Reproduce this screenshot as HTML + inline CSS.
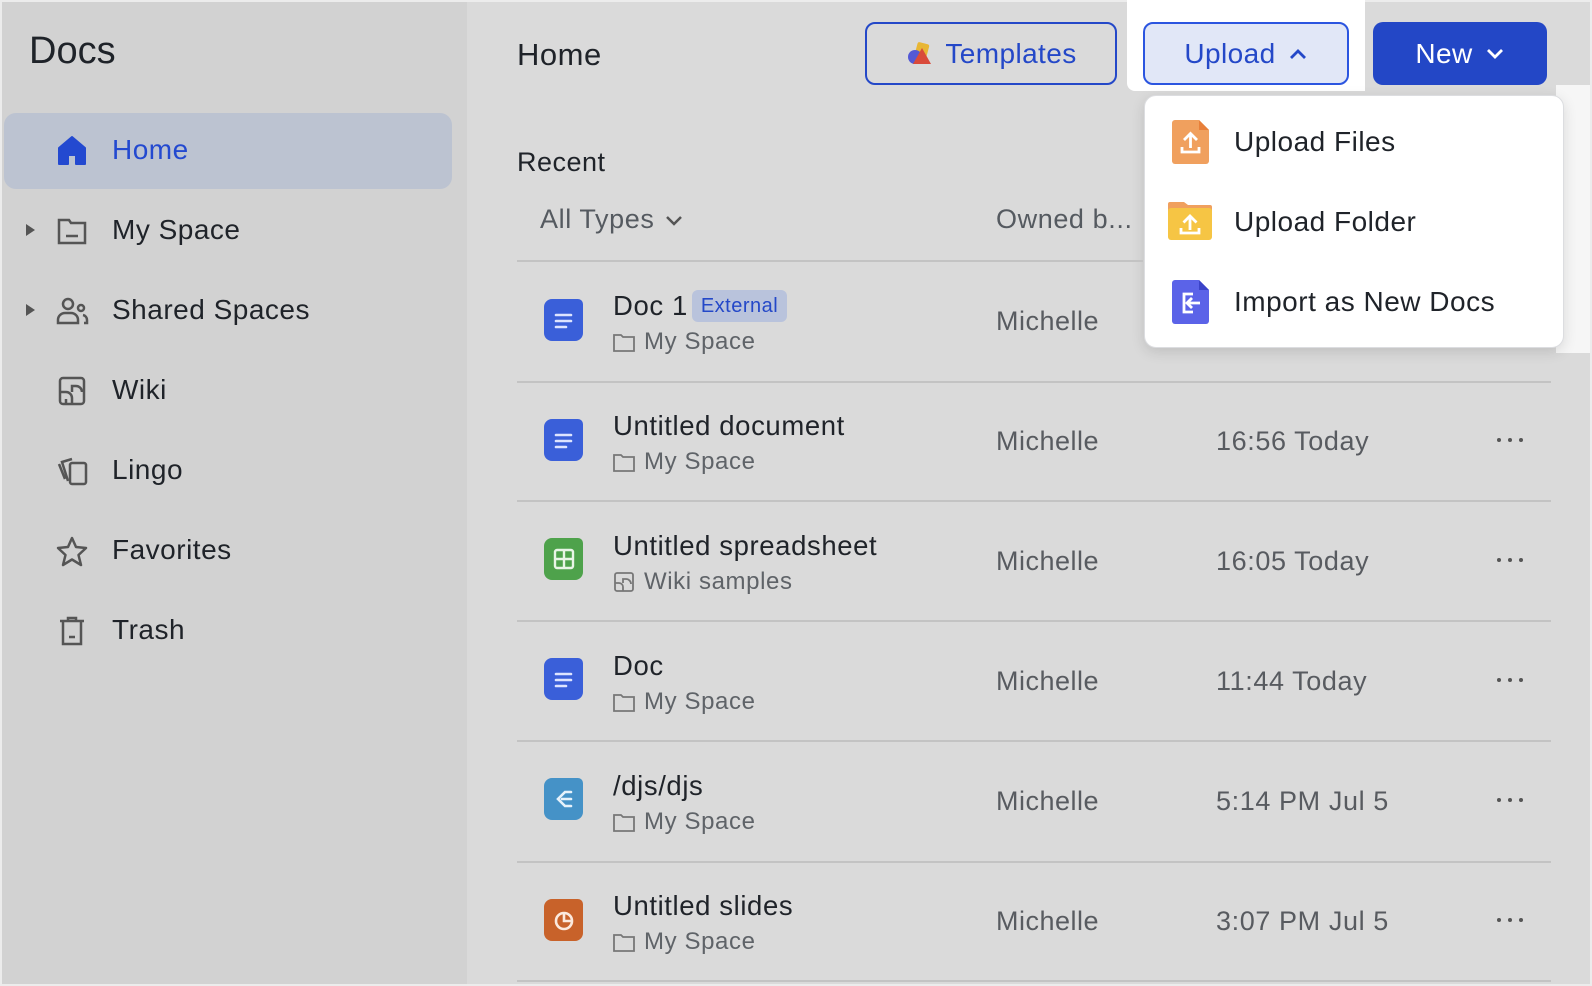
<!DOCTYPE html>
<html><head><meta charset="utf-8"><style>
*{margin:0;padding:0;box-sizing:border-box}
body{width:1592px;height:986px;overflow:hidden;background:#ececec;font-family:"Liberation Sans",sans-serif;position:relative}
.a{position:absolute}
.side{left:2px;top:2px;width:465px;height:982px;background:#d2d2d2}
.main{left:467px;top:2px;width:1123px;height:982px;background:#dadada}
.nav{position:absolute;left:0;height:40px;display:flex;align-items:center;font-size:28px;color:#1f2329;letter-spacing:0.5px}
.nav svg{position:absolute;left:56px;top:5px}
.nav span{position:absolute;left:112px;white-space:nowrap}
.car{position:absolute;left:26px;width:0;height:0;border-left:9px solid #555;border-top:6px solid transparent;border-bottom:6px solid transparent}
.btn{position:absolute;top:22px;height:63px;border-radius:10px;font-size:28px;display:flex;align-items:center;justify-content:center;letter-spacing:0.4px}
.line{position:absolute;left:517px;width:1034px;height:2px;background:#c3c3c3}
.t{position:absolute;left:613px;font-size:27.5px;color:#1f2329;white-space:nowrap;letter-spacing:0.6px}
.s{position:absolute;left:613px;font-size:24px;color:#5f6368;white-space:nowrap;letter-spacing:0.6px}
.s svg{vertical-align:-3px;margin-right:9px}
.o{position:absolute;left:996px;font-size:27px;color:#585b60;letter-spacing:0.5px}
.tm{position:absolute;left:1216px;font-size:27px;color:#585b60;letter-spacing:0.6px}
.d{position:absolute;left:1497px;width:30px;height:6px}
.d i{position:absolute;top:0;width:4px;height:4px;border-radius:50%;background:#555}
.ic{position:absolute;left:544px;width:39px;height:42px;border-radius:8px 5px 8px 8px}
.mi{position:absolute;left:1234px;font-size:28px;color:#1f2329;letter-spacing:0.5px}
</style></head><body>
<div class="a side"></div>
<div class="a main"></div>
<div class="a" style="left:29px;top:30px;font-size:38px;color:#1f2329">Docs</div>
<div class="a" style="left:4px;top:113px;width:448px;height:76px;background:#bcc3d1;border-radius:12px"></div>

<div class="nav" style="top:130px"><svg width="32" height="32" viewBox="0 0 32 32"><path d="M16 2 L29 13 V29 H20 V20 H12 V29 H3 V13 Z" fill="#2349d0" stroke="#2349d0" stroke-linejoin="round" stroke-width="2"/></svg><span style="color:#2349d0">Home</span></div>
<div class="car" style="top:224px"></div>
<div class="nav" style="top:210px"><svg width="32" height="32" viewBox="0 0 32 32" fill="none" stroke="#555" stroke-width="2.5"><path d="M3 5h10l2 3h14v20H3z"/><path d="M10 21h12"/></svg><span>My Space</span></div>
<div class="car" style="top:304px"></div>
<div class="nav" style="top:290px"><svg width="34" height="32" viewBox="0 0 34 32" fill="none" stroke="#555" stroke-width="2.5"><circle cx="12" cy="9" r="5"/><path d="M2 28v-3a7 7 0 0 1 7-7h6a7 7 0 0 1 7 7v3z"/><circle cx="25" cy="13" r="3"/><path d="M27 20a5 5 0 0 1 4 5v3h-3"/></svg><span>Shared Spaces</span></div>
<div class="nav" style="top:370px"><svg width="32" height="32" viewBox="0 0 32 32" fill="none" stroke="#555" stroke-width="2.5"><rect x="4" y="3" width="24" height="26" rx="3"/><path d="M4 17h6a6 6 0 0 1 6 6v6M10 29v-5M16 17V11h4a6 6 0 0 1 6 6"/></svg><span>Wiki</span></div>
<div class="nav" style="top:450px"><svg width="34" height="32" viewBox="0 0 34 32" fill="none" stroke="#555" stroke-width="2.5"><rect x="14" y="8" width="16" height="21" rx="2"/><path d="M12 26 6 7l10-3M9 24 3 9"/></svg><span>Lingo</span></div>
<div class="nav" style="top:530px"><svg width="32" height="32" viewBox="0 0 32 32" fill="none" stroke="#555" stroke-width="2.5" stroke-linejoin="round"><path d="M16 3l4 9 10 1-7.5 7 2.5 10-9-5.5-9 5.5 2.5-10L2 13l10-1z"/></svg><span>Favorites</span></div>
<div class="nav" style="top:610px"><svg width="32" height="32" viewBox="0 0 32 32" fill="none" stroke="#555" stroke-width="2.5"><path d="M4 6h24M12 6V3h8v3M7 6v23h18V6M13 22h6"/></svg><span>Trash</span></div>

<div class="a" style="left:517px;top:37px;font-size:31px;color:#1f2329;letter-spacing:0.5px">Home</div>
<div class="btn" style="left:865px;width:252px;border:2px solid #2448c8;color:#2448c8"><svg width="30" height="28" viewBox="0 0 30 28" style="margin-right:10px"><rect x="11" y="3" width="12" height="14" rx="2" fill="#e8b634" transform="rotate(15 17 10)"/><circle cx="10" cy="17" r="7" fill="#5359d6"/><path d="M17 8 26 24H8z" fill="#d94a3b"/></svg>Templates</div>
<div class="a" style="left:1127px;top:0;width:238px;height:91px;background:#fff;border-radius:0 0 0 8px"></div>
<div class="btn" style="left:1143px;width:206px;border:2px solid #2b55e0;background:#e1e7f7;color:#2448c8">Upload<svg width="20" height="14" viewBox="0 0 20 14" style="margin-left:12px"><path d="M3 11 10 4l7 7" fill="none" stroke="#2448c8" stroke-width="2.8"/></svg></div>
<div class="btn" style="left:1373px;width:174px;background:#2347c6;color:#fff">New<svg width="20" height="14" viewBox="0 0 20 14" style="margin-left:12px"><path d="M3 3l7 7 7-7" fill="none" stroke="#fff" stroke-width="2.8"/></svg></div>

<div class="a" style="left:1556px;top:85px;width:34px;height:268px;background:#f6f6f6"></div>
<div class="a" style="left:1144px;top:95px;width:420px;height:253px;background:#fff;border:1.5px solid #dcdde0;border-radius:12px;box-shadow:0 4px 14px rgba(0,0,0,.12)"></div>
<svg class="a" style="left:1172px;top:120px" width="37" height="44" viewBox="0 0 37 44"><path d="M3 0h24l10 10v31a3 3 0 0 1-3 3H3a3 3 0 0 1-3-3V3a3 3 0 0 1 3-3z" fill="#f0a05e"/><path d="M27 0l10 10H27z" fill="#e8803a"/><path d="M18.5 28V14M12 20l6.5-6.5L25 20M10 27v5h17v-5" fill="none" stroke="#fff" stroke-width="2.8"/></svg>
<div class="mi" style="top:126px">Upload Files</div>
<svg class="a" style="left:1168px;top:202px" width="44" height="38" viewBox="0 0 44 38"><path d="M2 0h14l4 3h22a2 2 0 0 1 2 2v5H0V2a2 2 0 0 1 2-2z" fill="#f0a05e"/><rect y="6" width="44" height="32" rx="3" fill="#f6c544"/><path d="M22 28V14M15.5 20.5 22 14l6.5 6.5M13 26v5h18v-5" fill="none" stroke="#fff" stroke-width="2.8"/></svg>
<div class="mi" style="top:206px">Upload Folder</div>
<svg class="a" style="left:1172px;top:280px" width="37" height="44" viewBox="0 0 37 44"><path d="M3 0h24l10 10v31a3 3 0 0 1-3 3H3a3 3 0 0 1-3-3V3a3 3 0 0 1 3-3z" fill="#5b63e8"/><path d="M27 0l10 10H27z" fill="#3b43c8"/><path d="M21 14h-9v18h9M28 23H16M20 18l-5 5 5 5" fill="none" stroke="#fff" stroke-width="2.8"/></svg>
<div class="mi" style="top:286px">Import as New Docs</div>

<div class="a" style="left:517px;top:147px;font-size:27px;color:#1f2329;letter-spacing:0.5px">Recent</div>
<div class="a" style="left:540px;top:204px;font-size:27px;color:#555a60;letter-spacing:0.6px">All Types<svg width="20" height="14" viewBox="0 0 20 14" style="margin-left:10px"><path d="M3 3l7 7 7-7" fill="none" stroke="#555" stroke-width="2.5"/></svg></div>
<div class="a" style="left:996px;top:204px;font-size:27px;color:#555a60;letter-spacing:0.6px">Owned b...</div>
<div class="line" style="top:260px;width:626px"></div>

<div class="ic" style="top:299px;background:#3a5fd9"></div>
<svg class="a" style="left:544px;top:299px" width="39" height="42"><path d="M12 16h15M12 22h15M12 28h10" stroke="#dde4ff" stroke-width="2.6" stroke-linecap="round"/></svg>
<div class="t" style="top:290px">Doc 1</div>
<div class="a" style="left:692px;top:290px;width:95px;height:32px;background:#b9c3dc;border-radius:6px;color:#2448c8;font-size:20px;text-align:center;line-height:32px;letter-spacing:0.5px">External</div>
<div class="s" style="top:328px"><svg width="22" height="18" viewBox="0 0 22 18" fill="none" stroke="#777" stroke-width="1.8"><path d="M1 1h7l2 2h11v14H1z"/></svg>My Space</div>
<div class="o" style="top:306px">Michelle</div>
<div class="line" style="top:381px"></div>

<div class="ic" style="top:419px;background:#3a5fd9"></div>
<svg class="a" style="left:544px;top:419px" width="39" height="42"><path d="M12 16h15M12 22h15M12 28h10" stroke="#dde4ff" stroke-width="2.6" stroke-linecap="round"/></svg>
<div class="t" style="top:410px">Untitled document</div>
<div class="s" style="top:448px"><svg width="22" height="18" viewBox="0 0 22 18" fill="none" stroke="#777" stroke-width="1.8"><path d="M1 1h7l2 2h11v14H1z"/></svg>My Space</div>
<div class="o" style="top:426px">Michelle</div><div class="tm" style="top:426px">16:56 Today</div><div class="d" style="top:438px"><i style="left:0"></i><i style="left:11px"></i><i style="left:22px"></i></div>
<div class="line" style="top:500px"></div>

<div class="ic" style="top:538px;background:#4ea24b"></div>
<svg class="a" style="left:544px;top:538px" width="39" height="42" fill="none" stroke="#e8f5e6" stroke-width="2.4"><rect x="11" y="12" width="18" height="18" rx="2"/><path d="M20 12v18M11 21h18"/></svg>
<div class="t" style="top:530px">Untitled spreadsheet</div>
<div class="s" style="top:568px"><svg width="22" height="20" viewBox="0 0 22 20" fill="none" stroke="#777" stroke-width="1.8"><rect x="2" y="1" width="18" height="18" rx="2"/><path d="M2 11h4a4 4 0 0 1 4 4v4M10 11V7h3a5 5 0 0 1 5 5"/></svg>Wiki samples</div>
<div class="o" style="top:546px">Michelle</div><div class="tm" style="top:546px">16:05 Today</div><div class="d" style="top:558px"><i style="left:0"></i><i style="left:11px"></i><i style="left:22px"></i></div>
<div class="line" style="top:620px"></div>

<div class="ic" style="top:658px;background:#3a5fd9"></div>
<svg class="a" style="left:544px;top:658px" width="39" height="42"><path d="M12 16h15M12 22h15M12 28h10" stroke="#dde4ff" stroke-width="2.6" stroke-linecap="round"/></svg>
<div class="t" style="top:650px">Doc</div>
<div class="s" style="top:688px"><svg width="22" height="18" viewBox="0 0 22 18" fill="none" stroke="#777" stroke-width="1.8"><path d="M1 1h7l2 2h11v14H1z"/></svg>My Space</div>
<div class="o" style="top:666px">Michelle</div><div class="tm" style="top:666px">11:44 Today</div><div class="d" style="top:678px"><i style="left:0"></i><i style="left:11px"></i><i style="left:22px"></i></div>
<div class="line" style="top:740px"></div>

<div class="ic" style="top:778px;background:#4592c7"></div>
<svg class="a" style="left:544px;top:778px" width="39" height="42" fill="none" stroke="#e6f2fb" stroke-width="2.6" stroke-linecap="round"><path d="M27 14h-6l-7 7 7 7h6M18 21h9"/></svg>
<div class="t" style="top:770px">/djs/djs</div>
<div class="s" style="top:808px"><svg width="22" height="18" viewBox="0 0 22 18" fill="none" stroke="#777" stroke-width="1.8"><path d="M1 1h7l2 2h11v14H1z"/></svg>My Space</div>
<div class="o" style="top:786px">Michelle</div><div class="tm" style="top:786px">5:14 PM Jul 5</div><div class="d" style="top:798px"><i style="left:0"></i><i style="left:11px"></i><i style="left:22px"></i></div>
<div class="line" style="top:861px"></div>

<div class="ic" style="top:899px;background:#c8622a"></div>
<svg class="a" style="left:544px;top:899px" width="39" height="42" fill="none" stroke="#fbe9dd" stroke-width="2.6"><circle cx="20" cy="22" r="8"/><path d="M20 14v8h8"/></svg>
<div class="t" style="top:890px">Untitled slides</div>
<div class="s" style="top:928px"><svg width="22" height="18" viewBox="0 0 22 18" fill="none" stroke="#777" stroke-width="1.8"><path d="M1 1h7l2 2h11v14H1z"/></svg>My Space</div>
<div class="o" style="top:906px">Michelle</div><div class="tm" style="top:906px">3:07 PM Jul 5</div><div class="d" style="top:918px"><i style="left:0"></i><i style="left:11px"></i><i style="left:22px"></i></div>
<div class="line" style="top:980px"></div>
</body></html>
